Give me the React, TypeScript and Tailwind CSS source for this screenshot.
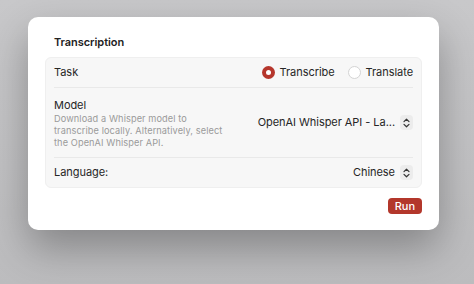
import React from 'react';

const Stepper = () => (
  <span className="ml-[5px] flex h-[15px] w-[13px] items-center justify-center rounded-[4px] bg-[#ececec]">
    <svg width="7" height="10" viewBox="0 0 7 10" fill="none" stroke="#333" strokeWidth="1.2" strokeLinecap="round" strokeLinejoin="round">
      <path d="M1 3.6 L3.5 1.2 L6 3.6" />
      <path d="M1 6.4 L3.5 8.8 L6 6.4" />
    </svg>
  </span>
);

const Radio = ({ checked, label }: { checked: boolean; label: string }) => (
  <label className="flex items-center gap-[5px]">
    {checked ? (
      <span className="flex h-[13px] w-[13px] items-center justify-center rounded-full bg-[#b5362c]">
        <span className="h-[5px] w-[5px] rounded-full bg-white" />
      </span>
    ) : (
      <span className="h-[13px] w-[13px] rounded-full border border-[#d4d4d4] bg-white" />
    )}
    <span>{label}</span>
  </label>
);

export default function App() {
  return (
    <div
      className="h-[284px] w-[474px] overflow-hidden bg-gradient-to-b from-[#c8c8ca] to-[#bcbcbe] px-[28px] pt-[17px] text-[11px] tracking-[-0.05px] text-[#262626]"
      style={{ fontFamily: 'Inter, "Noto Sans", sans-serif' }}
    >
      <div className="h-[213px] w-[411px] rounded-[10px] bg-white shadow-[0_18px_40px_rgba(0,0,0,0.3)]">
        <div className="px-[26px] pt-[17px] text-[11px] font-semibold leading-[16px] text-[#222]">Transcription</div>
        <div className="mx-[17px] mt-[7px] rounded-[6px] border border-[#efefef] bg-[#f7f7f7] px-[8px]">
          <div className="flex h-[30px] items-center justify-between border-b border-[#e9e9e9]">
            <span>Task</span>
            <div className="flex items-center gap-[13px]">
              <Radio checked label="Transcribe" />
              <Radio checked={false} label="Translate" />
            </div>
          </div>
          <div className="flex h-[70px] items-center justify-between border-b border-[#e9e9e9]">
            <div className="flex flex-col">
              <span className="leading-[16px]">Model</span>
              <span className="whitespace-nowrap text-[9.2px] leading-[12px] tracking-[0.1px] text-[#9a9a9a]">
                Download a Whisper model to
                <br />
                transcribe locally. Alternatively, select
                <br />
                the OpenAI Whisper API.
              </span>
            </div>
            <div className="flex items-center whitespace-nowrap">
              <span>OpenAI Whisper API - La...</span>
              <Stepper />
            </div>
          </div>
          <div className="flex h-[29px] items-center justify-between">
            <span>Language:</span>
            <div className="flex items-center">
              <span>Chinese</span>
              <Stepper />
            </div>
          </div>
        </div>
        <div className="mx-[17px] mt-[10px] flex justify-end">
          <button className="h-[16px] rounded-[4px] bg-[#b3372b] px-[7px] text-[11px] font-medium leading-[16px] text-white">
            Run
          </button>
        </div>
      </div>
    </div>
  );
}
